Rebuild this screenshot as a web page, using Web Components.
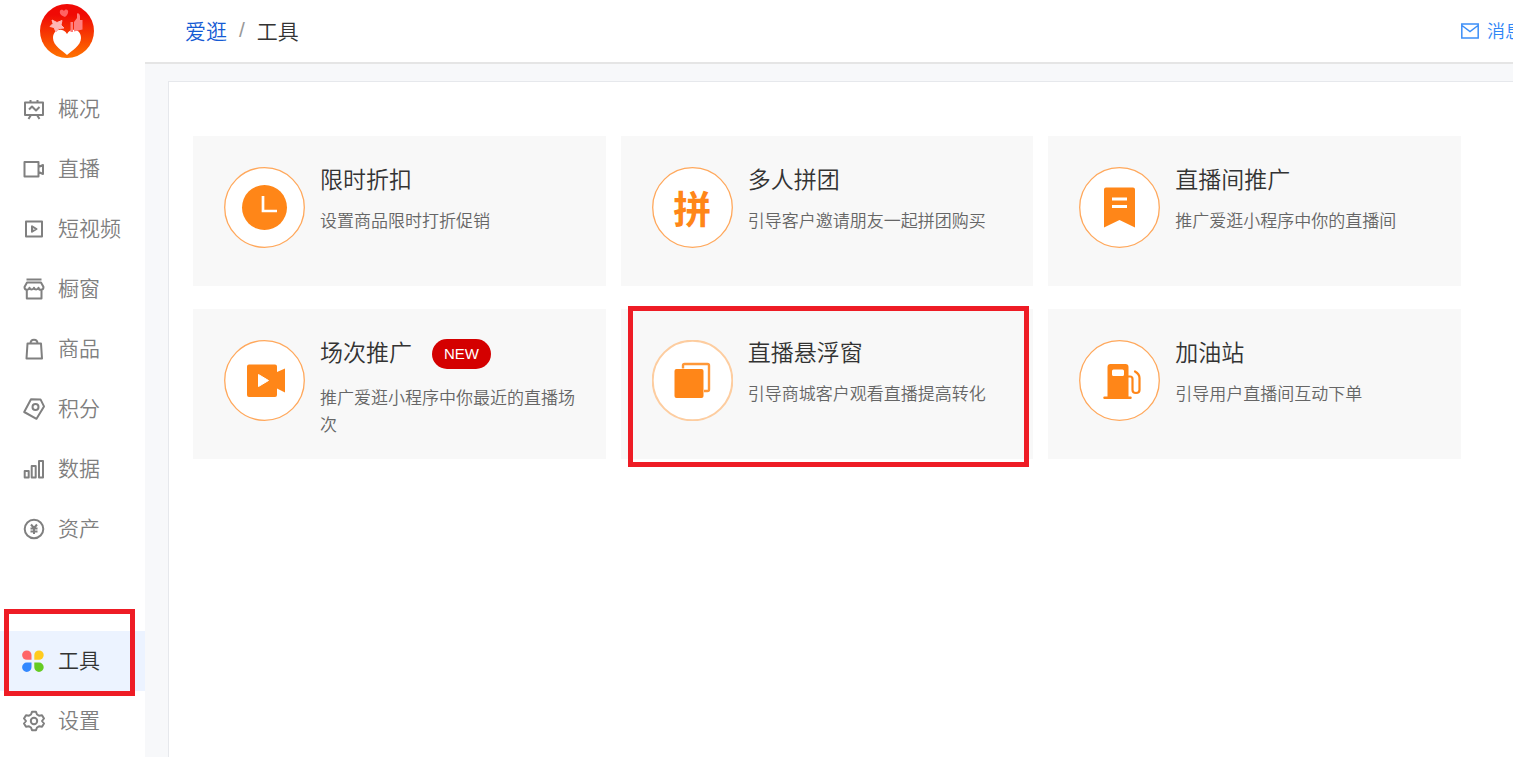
<!DOCTYPE html>
<html lang="zh-CN">
<head>
<meta charset="utf-8">
<meta name="viewport" content="width=device-width, initial-scale=1">
<title>爱逛 - 工具</title>
<style>
  html, body { margin: 0; }
  body {
    font-family: "Noto Sans CJK SC", "Liberation Sans", sans-serif;
    font-weight: 350;
    color: #333;
    background: #f7f8fa;
    overflow: hidden;
  }
</style>
</head>
<body>
<app-shell>
  <side-nav slot="side">
    <nav-item icon="overview">概况</nav-item>
    <nav-item icon="live">直播</nav-item>
    <nav-item icon="video">短视频</nav-item>
    <nav-item icon="shop">橱窗</nav-item>
    <nav-item icon="goods">商品</nav-item>
    <nav-item icon="points">积分</nav-item>
    <nav-item icon="data">数据</nav-item>
    <nav-item icon="assets">资产</nav-item>
    <nav-item slot="bottom" icon="tools" active marked>工具</nav-item>
    <nav-item slot="bottom" icon="settings">设置</nav-item>
  </side-nav>
  <top-bar slot="top"><span slot="parent">爱逛</span><span slot="current">工具</span><span slot="message">消息</span></top-bar>
  <tool-grid>
    <tool-card icon="clock"><span slot="title">限时折扣</span>设置商品限时打折促销</tool-card>
    <tool-card icon="group"><span slot="title">多人拼团</span>引导客户邀请朋友一起拼团购买</tool-card>
    <tool-card icon="bookmark"><span slot="title">直播间推广</span>推广爱逛小程序中你的直播间</tool-card>
    <tool-card icon="camera" badge="NEW"><span slot="title">场次推广</span>推广爱逛小程序中你最近的直播场次</tool-card>
    <tool-card icon="windows" marked><span slot="title">直播悬浮窗</span>引导商城客户观看直播提高转化</tool-card>
    <tool-card icon="fuel"><span slot="title">加油站</span>引导用户直播间互动下单</tool-card>
  </tool-grid>
</app-shell>

<script>
const NAV_ICONS = {
  overview: '<path d="M2 4.5h18v12.500H2zM7.500 2v2.500M14.500 2v2.500M8 17l-2.500 4M14 17l2.500 4M6 11.500l3-3 4 4 3.500-3.500"/>',
  live: '<path d="M1.500 4h14v14.500h-14zM15.500 9l4.500-2v9l-4.500-2"/>',
  video: '<path d="M3 3.500h16V18.500H3z"/><path d="M9 8.300l4.500 2.700-4.500 2.700z"/>',
  shop: '<path d="M3.500 1.500h15M4 4.500h14l2.500 4.500c0 3.600-4.500 3.600-5 .8-.8 2.400-4 2.400-4.500 0-.8 2.400-4 2.400-4.500 0-.8 2.800-5 2.800-5-.8zM3.800 12v8.500h14.700V12"/>',
  goods: '<path d="M4.500 5.500h13.500l1 15H3.500zM7.500 5.500c0-5 7-5 7 0"/>',
  points: '<path d="M8 1.200l9.500.2 3.500 7-7.500 12.400L1.200 14z"/><circle cx="12.500" cy="9" r="3"/>',
  data: '<path d="M1.700 13h4v6.500h-4zM8.700 8h4v11.500h-4zM16 3h4v16.500h-4z"/>',
  assets: '<circle cx="11" cy="11" r="9.300"/><path d="M8 6.500l3 3.500 3-3.500M7.500 10.500h7M7.500 13.500h7M11 10v6"/>',
  tools: '<g stroke="none"><path fill="#ff6568" d="M8.500 9.800H3.800A4.700 4.700 0 1 1 8.500 5.100z"/><path fill="#ffcb1f" d="M11.300 9.800V5.100A4.700 4.700 0 1 1 16 9.800z"/><path fill="#3388ff" d="M8.500 12.600V17.300A4.700 4.700 0 1 1 3.800 12.600z"/><path fill="#65cb22" d="M11.300 12.600H16A4.700 4.700 0 1 1 11.300 17.300z"/></g>',
  settings: '<path d="M8 4.500 9 1.800h4l1 2.700 2 1.200 3-.5 2 3.300-2 2.500 2 2.500-2 3.300-3-.5-2 1.200-1 2.700H9l-1-2.700-2-1.200-3 .5-2-3.300L3 11 1 8.500l2-3.300 3 .5z"/><circle cx="11" cy="11" r="3.200"/>'
};
const TOOL_ICONS = {
  clock: '<circle cx="40.500" cy="40.500" r="22.500" fill="#ff8618"/><path d="M39 29v15h14" fill="none" stroke="#fff" stroke-width="2.700"/>',
  group: '',
  bookmark: '<path fill="#ff8618" d="M27 20.500h27a2 2 0 0 1 2 2v38l-15.500-7.500L25 60.500v-38a2 2 0 0 1 2-2z"/><path d="M33 32h15M33 39.500h15" stroke="#fff" stroke-width="3"/>',
  camera: '<path fill="#ff8618" d="M25 24.500h26a2 2 0 0 1 2 2V32l8-3.500v24L53 48.500v6.500a2 2 0 0 1-2 2H25a2 2 0 0 1-2-2V26.500a2 2 0 0 1 2-2z"/><path fill="#fff" stroke="#fff" stroke-linejoin="round" d="M34.500 34.500v12l10-6z"/>',
  windows: '<rect x="31" y="24" width="26" height="27" rx="1.500" fill="none" stroke="#ff9838" stroke-width="2.400"/><rect x="22" y="28.500" width="30" height="30" rx="2.500" fill="#fff"/><rect x="22.500" y="29" width="29" height="29" rx="2" fill="#ff8618"/>',
  fuel: '<path fill="#ff8618" fill-rule="evenodd" d="M31.500 24h15a3 3 0 0 1 3 3v29.500h2a1 1 0 0 1 0 2.500h-26a1 1 0 0 1 0-2.500h3V27a3 3 0 0 1 3-3zM34.500 29.500a1.500 1.500 0 0 0-1.500 1.500v3.500a1.500 1.500 0 0 0 1.500 1.500h9a1.500 1.500 0 0 0 1.500-1.500V31a1.500 1.500 0 0 0-1.500-1.500z"/><path d="M49 36.500h2q2.500 0 2.500 2.500v11q0 3 3.500 3t3.500-3V38q0-4-4.500-6.500" fill="none" stroke="#ff8618" stroke-width="2.200" stroke-linecap="round"/>'
};

function define(name, render) {
  customElements.define(name, class extends HTMLElement {
    connectedCallback() {
      if (this.shadowRoot) return;
      this.attachShadow({ mode: 'open' }).innerHTML = render(this);
    }
  });
}

define('app-shell', () => `
  <style>
    :host { display: grid; grid-template-columns: 145px minmax(0, 1fr); min-height: 100vh; }
    .page { display: flex; flex-direction: column; min-width: 0; }
    main { flex: 1; display: flex; padding: 17px 0 0 23px; }
  </style>
  <slot name="side"></slot>
  <div class="page"><slot name="top"></slot><main><slot></slot></main></div>`);

define('side-nav', () => `
  <style>
    :host { display: block; background: #fff; }
    .logo { display: block; width: 54px; margin: 4px 0 21px 40px; }
    .logo svg { display: block; width: 54px; height: 54px; }
    .bottom { margin-top: 72px; }
  </style>
  <a class="logo" href="#" aria-label="爱逛">
    <svg viewBox="0 0 54 54" aria-hidden="true">
      <defs><linearGradient id="g" x1="0" y1="0" x2="0" y2="1"><stop offset=".2" stop-color="#f00a05"/><stop offset="1" stop-color="#ff7300"/></linearGradient></defs>
      <circle cx="27" cy="27" r="27" fill="url(#g)"/>
      <path fill="#fff" d="M27 51C23 47 13 42 13 34c0-9 10-11 14-4 4-7 14-5 14 4 0 8-10 13-14 17z"/>
      <path fill="#ffb5b5" stroke="#ffb5b5" stroke-linejoin="round" d="M12 16l5 2.500 5-2-1 4.500 3 3-5 .5-3 3.500-2-4.500-4-1 3-3z"/>
      <path fill="#ff7e7c" d="M30.500 18h2.500v10h-2.500zM34 18l3-4V9.500q2.500-1 3 2.500v4h2.500v9.500L34 27.500z"/>
      <path fill="#ff6262" d="M25 13c-3-1-6-3-5-6 1-2 3-1 4 0 2-3 5-1 4 2-.500 2-2 3-3 4z"/>
    </svg>
  </a>
  <nav><slot></slot><div class="bottom"><slot name="bottom"></slot></div></nav>`);

define('nav-item', el => `
  <style>
    :host { display: block; position: relative; }
    a { display: flex; align-items: center; gap: 13px; height: 60px; padding-left: 23px; color: #7f7f7f; font-size: 21px; line-height: 30px; text-decoration: none; white-space: nowrap; }
    span { padding-bottom: 4px; }
    svg { width: 22px; height: 22px; flex: none; fill: none; stroke: #808080; stroke-width: 2; stroke-linejoin: round; overflow: visible; }
    :host([active]) a { background: #ecf3ff; color: #333; }
    .mark { position: absolute; inset: -22px 10px -5px 4px; border: 5px solid #ee1c25; pointer-events: none; z-index: 1; }
  </style>
  <a href="#"${el.hasAttribute('active') ? ' aria-current="page"' : ''}><svg viewBox="0 0 22 22" aria-hidden="true">${NAV_ICONS[el.getAttribute('icon')]}</svg><span><slot></slot></span></a>
  ${el.hasAttribute('marked') ? '<div class="mark"></div>' : ''}`);

define('top-bar', () => `
  <style>
    :host { display: block; background: #fff; border-bottom: 2px solid #e5e5e5; overflow: hidden; }
    header { display: flex; align-items: center; justify-content: space-between; height: 62px; padding-left: 40px; }
    nav { display: flex; gap: 12px; padding-bottom: 2px; font-size: 21px; line-height: 30px; }
    a { text-decoration: none; color: #155bd4; }
    .sep { color: #999; font-family: "Liberation Sans", sans-serif; }
    .msg { display: flex; align-items: center; gap: 8px; margin-right: -10px; color: #2f86f6; font-size: 18px; line-height: 30px; white-space: nowrap; }
    .msg span { padding-bottom: 2px; }
    svg { width: 18px; height: 16px; fill: none; stroke: #3d8ff7; stroke-width: 1.500; }
  </style>
  <header>
    <nav aria-label="面包屑"><a href="#"><slot name="parent"></slot></a><span class="sep">/</span><slot name="current"></slot></nav>
    <a class="msg" href="#"><svg viewBox="0 0 18 16" aria-hidden="true"><path d="M.800 1h16.400v14H.800zM1 2.500l8 6 8-6"/></svg><span><slot name="message"></slot></span></a>
  </header>`);

define('tool-grid', () => `
  <style>
    :host { display: block; flex: 1; min-width: 0; background: #fff; border: solid #e6e8ec; border-width: 1px 0 0 1px; padding: 54px 52px 54px 24px; }
    .grid { display: grid; grid-template-columns: repeat(3, minmax(0, 1fr)); gap: 23px 15px; }
  </style>
  <div class="grid"><slot></slot></div>`);

define('tool-card', el => {
  const icon = el.getAttribute('icon');
  return `
  <style>
    :host { display: block; position: relative; }
    a { display: flex; gap: 15px; box-sizing: border-box; min-height: 150px; padding: 29px 24px 20px 31px; background: #f8f8f8; color: inherit; text-decoration: none; }
    .icon { display: grid; place-items: center; flex: none; width: 81px; height: 81px; margin-top: 2px; }
    .icon > * { grid-area: 1 / 1; }
    .ring { fill: #fff; stroke: #ffa85c; stroke-width: 1.300; }
    :host([marked]) .ring { stroke: #fdcda0; stroke-width: 2; }
    .glyph { padding-bottom: 2px; color: #ff8618; font-size: 38px; line-height: 38px; font-weight: 700; }
    .head { display: flex; align-items: flex-start; gap: 20px; }
    h2 { margin: 0; font-size: 23px; line-height: 27px; font-weight: inherit; color: #333; }
    .badge { margin-top: 1px; padding: 0 12px; border-radius: 15px; background: #d40000; color: #fff; font: 400 15px/30px "Liberation Sans", sans-serif; }
    p { margin: 14px 0 0; font-size: 17px; line-height: 27px; color: #666; }
    .mark { position: absolute; inset: -3px 4px -8px 7px; border: 5px solid #ee1c25; pointer-events: none; }
  </style>
  <a href="#">
    <span class="icon"><svg width="81" height="81" viewBox="0 0 81 81" aria-hidden="true"><circle class="ring" cx="40.500" cy="40.500" r="39.800"/>${TOOL_ICONS[icon]}</svg>${icon === 'group' ? '<span class="glyph">拼</span>' : ''}</span>
    <div>
      <div class="head"><h2><slot name="title"></slot></h2>${el.hasAttribute('badge') ? `<span class="badge">${el.getAttribute('badge')}</span>` : ''}</div>
      <p><slot></slot></p>
    </div>
  </a>
  ${el.hasAttribute('marked') ? '<div class="mark"></div>' : ''}`;
});
</script>
</body>
</html>
